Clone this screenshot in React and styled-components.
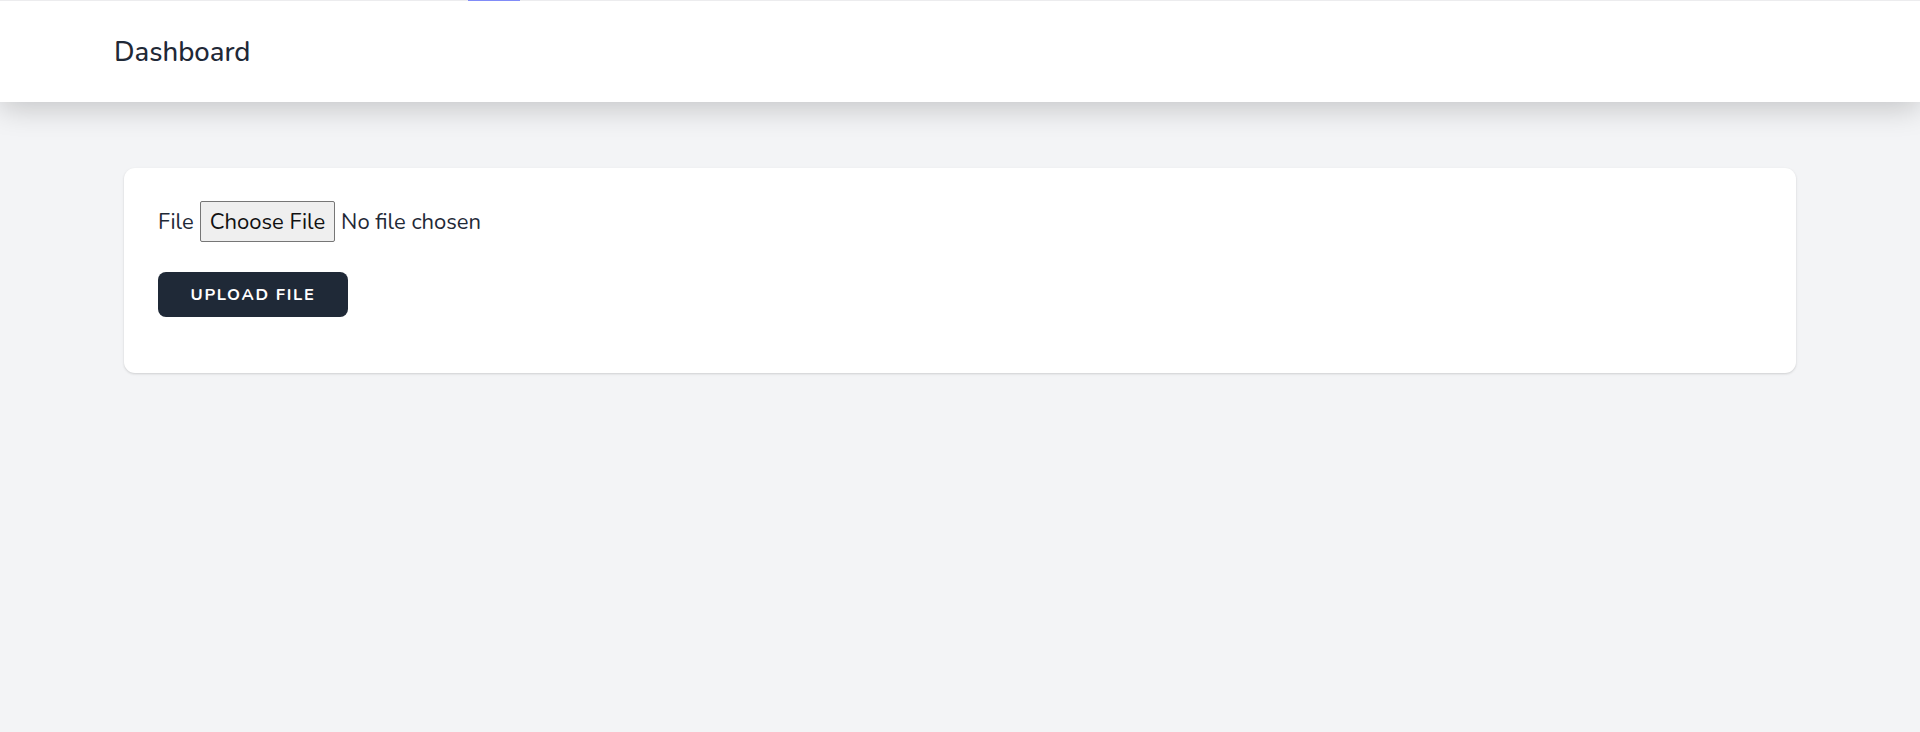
import React from 'react';
import styled, { createGlobalStyle } from 'styled-components';

const FONT = `"Nunito", "Open Sans", "Lato", sans-serif`;

const GlobalStyle = createGlobalStyle`
    html, body {
        margin: 0;
        padding: 0;
        background: #f3f4f6;
        font-family: ${FONT};
        color: #1f2937;
    }
    * {
        box-sizing: border-box;
    }
`;

const Page = styled.div`
    min-height: 732px;
    background: #f3f4f6;
`;

const Header = styled.header`
    position: relative;
    z-index: 1;
    background: #fff;
    box-shadow: 0 6px 28px rgba(0, 0, 0, 0.2);
`;

const TopEdge = styled.div`
    display: flex;
    height: 1px;
    background: #ececee;
`;

const ActiveMark = styled.div`
    margin-left: ${props => props.offset}px;
    width: ${props => props.width}px;
    height: 1px;
    background: #818cf8;
`;

const HeaderBar = styled.div`
    display: flex;
    align-items: center;
    height: 101px;
    padding-left: 114px;
`;

const Title = styled.h2`
    margin: 0;
    font-size: 27.5px;
    line-height: 34px;
    font-weight: 500;
    color: #1f2937;
`;

const Main = styled.main`
    padding: 66px 124px 0;
`;

const Card = styled.div`
    background: #fff;
    border-radius: 11px;
    box-shadow: 0 1px 3px rgba(0, 0, 0, 0.1), 0 1px 2px rgba(0, 0, 0, 0.06);
    padding: 33px 34px 56px;
`;

const Form = styled.form`
    display: flex;
    flex-direction: column;
    align-items: flex-start;
    gap: 30px;
`;

const FieldRow = styled.div`
    display: flex;
    align-items: center;
    height: 41px;
`;

const Label = styled.label`
    font-size: 22px;
    color: #1f2937;
    margin-right: 6px;
`;

const FileInput = styled.input`
    font-family: ${FONT};
    font-size: 22px;
    color: #1f2937;
    height: 41px;

    &::file-selector-button {
        font-family: ${FONT};
        font-size: 22px;
        color: #111;
        height: 41px;
        padding: 0 9px;
        margin-right: 6px;
        background: #efefef;
        border: 1px solid #767676;
        border-radius: 2px;
    }
`;

const UploadButton = styled.button`
    display: flex;
    align-items: center;
    justify-content: center;
    width: 190px;
    height: 45px;
    border: 0;
    border-radius: 8px;
    background: #1f2937;
    color: #fff;
    font-family: ${FONT};
    font-size: 16.5px;
    font-weight: 700;
    letter-spacing: 1.65px;
    text-transform: uppercase;
    cursor: pointer;
`;

const App = () => {
    return (
        <Page>
            <GlobalStyle />
            <Header>
                <TopEdge>
                    <ActiveMark offset={468} width={52} />
                </TopEdge>
                <HeaderBar>
                    <Title>Dashboard</Title>
                </HeaderBar>
            </Header>
            <Main>
                <Card>
                    <Form onSubmit={e => e.preventDefault()}>
                        <FieldRow>
                            <Label htmlFor="file">File</Label>
                            <FileInput type="file" id="file" name="file" />
                        </FieldRow>
                        <UploadButton type="submit">Upload File</UploadButton>
                    </Form>
                </Card>
            </Main>
        </Page>
    );
};

export default App;
